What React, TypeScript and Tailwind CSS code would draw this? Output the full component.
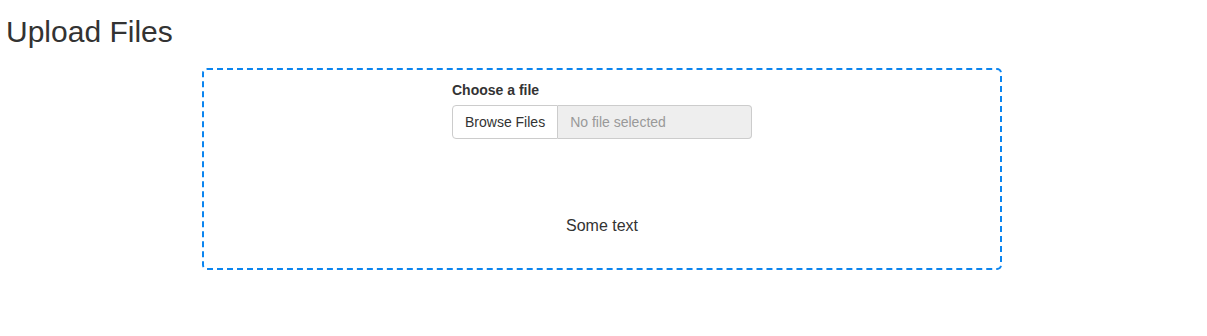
import React from 'react';

const App: React.FC = () => {
  return (
    <div
      className="min-h-screen bg-white text-[#333] px-[6px]"
      style={{ fontFamily: "'Liberation Sans', Arial, sans-serif" }}
    >
      {/* Title */}
      <h2 className="pt-[15px] text-[30px] leading-[33px] font-normal">Upload Files</h2>

      {/* Drop zone */}
      <div className="mt-[20px] ml-[196px] w-[800px] h-[202px] border-2 border-dashed border-[#0b85f0] rounded-[5px] flex flex-col items-center">
        <div className="w-[300px] mt-[10px]">
          <label className="block text-[14px] leading-[20px] font-bold mb-[5px]">Choose a file</label>
          <div className="flex h-[34px] text-[14px]">
            <span className="flex items-center px-[12px] bg-white border border-[#ccc] rounded-l-[4px]">
              Browse Files
            </span>
            <span className="flex-1 flex items-center px-[12px] bg-[#eee] border border-l-0 border-[#ccc] rounded-r-[4px] text-[#999]">
              No file selected
            </span>
          </div>
        </div>
        <p className="mt-[76px] text-[16px] leading-[22px]">Some text</p>
      </div>
    </div>
  );
};

export default App;
